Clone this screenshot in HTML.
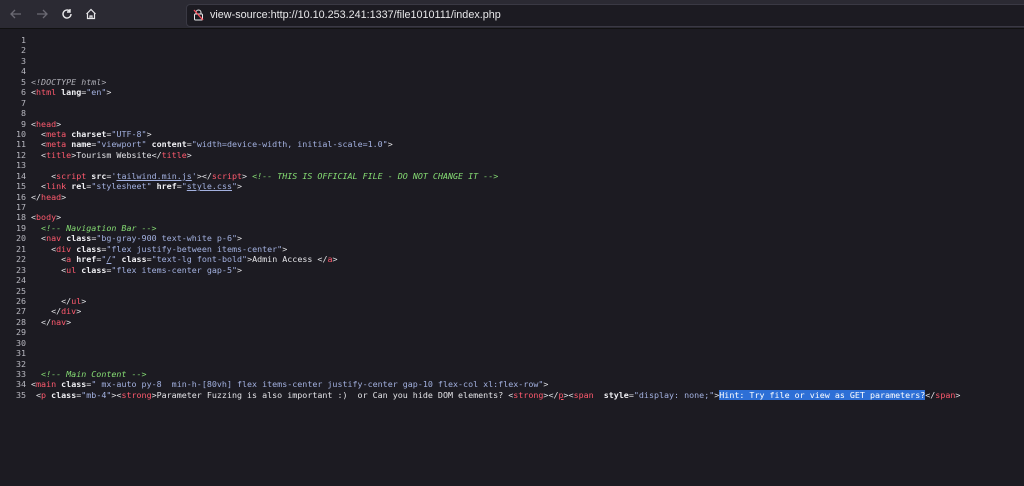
<!DOCTYPE html>
<html><head><style>
body{margin:0;width:1024px;height:486px;background:#1c1b22;overflow:hidden;font-family:"Liberation Sans",sans-serif}
.tb{position:absolute;left:0;top:0;width:1024px;height:28px;background:#2b2a33;border-bottom:1px solid #111}
.url{position:absolute;left:186px;top:4px;width:850px;height:21px;background:#1c1b22;border-radius:4px;border:1px solid #3a3944}
.url span{position:absolute;left:23px;top:4px;color:#e8e8ea;font-size:10.8px}
pre{position:absolute;left:0;top:35px;margin:0;font-family:"DejaVu Sans Mono","Liberation Mono",monospace;font-size:8.35px;line-height:10.44px;color:#e4e4e8}
.n{display:inline-block;width:26px;text-align:right;color:#b8b8c0;margin-right:5px}
.t{color:#ff5a6e}.a{color:#f0f0f4;font-weight:bold}.v{color:#a3b1e0}.c{color:#86de74;font-style:italic}.d{color:#b0b0b8;font-style:italic}
.u{text-decoration:underline}.h{background:#2d6fd6;color:#fff}
</style></head><body>
<div class="tb">
<svg style="position:absolute;left:10px;top:8px" width="12" height="12" viewBox="0 0 12 12"><path d="M11 6H1M5 2L1 6l4 4" stroke="#6b6a73" stroke-width="1.3" fill="none"/></svg>
<svg style="position:absolute;left:36px;top:8px" width="12" height="12" viewBox="0 0 12 12"><path d="M1 6h10M7 2l4 4-4 4" stroke="#6b6a73" stroke-width="1.3" fill="none"/></svg>
<svg style="position:absolute;left:61px;top:8px" width="12" height="12" viewBox="0 0 12 12"><path d="M10 6a4 4 0 1 1-1.5-3.1M9 1v3H6" stroke="#e8e8ea" stroke-width="1.4" fill="none"/></svg>
<svg style="position:absolute;left:85px;top:8px" width="12" height="12" viewBox="0 0 12 12"><path d="M1.5 6L6 1.5 10.5 6M2.5 5v5.5h7V5M5 10.5V8h2v2.5" stroke="#e8e8ea" stroke-width="1.2" fill="none"/></svg>
<div class="url"><svg style="position:absolute;left:6px;top:4px" width="11" height="12" viewBox="0 0 11 12"><rect x="1.5" y="5" width="8" height="6" rx="1" stroke="#e8e8ea" fill="none"/><path d="M3 5V3.5a2.5 2.5 0 0 1 5 0V5" stroke="#e8e8ea" fill="none"/><path d="M1 1l9 10" stroke="#ff4f5e" stroke-width="1.3"/></svg><span>view-source:http://10.10.253.241:1337/file1010111/index.php</span></div>
</div>
<pre><span class="n">1</span>
<span class="n">2</span>
<span class="n">3</span>
<span class="n">4</span>
<span class="n">5</span><span class="d">&lt;!DOCTYPE html&gt;</span>
<span class="n">6</span>&lt;<span class="t">html</span> <span class="a">lang</span>=<span class="v">"en"</span>&gt;
<span class="n">7</span>
<span class="n">8</span>
<span class="n">9</span>&lt;<span class="t">head</span>&gt;
<span class="n">10</span>  &lt;<span class="t">meta</span> <span class="a">charset</span>=<span class="v">"UTF-8"</span>&gt;
<span class="n">11</span>  &lt;<span class="t">meta</span> <span class="a">name</span>=<span class="v">"viewport"</span> <span class="a">content</span>=<span class="v">"width=device-width, initial-scale=1.0"</span>&gt;
<span class="n">12</span>  &lt;<span class="t">title</span>&gt;Tourism Website&lt;/<span class="t">title</span>&gt;
<span class="n">13</span>
<span class="n">14</span>    &lt;<span class="t">script</span> <span class="a">src</span>=<span class="v">'<span class="u">tailwind.min.js</span>'</span>&gt;&lt;/<span class="t">script</span>&gt; <span class="c">&lt;!-- THIS IS OFFICIAL FILE - DO NOT CHANGE IT --&gt;</span>
<span class="n">15</span>  &lt;<span class="t">link</span> <span class="a">rel</span>=<span class="v">"stylesheet"</span> <span class="a">href</span>=<span class="v">"<span class="u">style.css</span>"</span>&gt;
<span class="n">16</span>&lt;/<span class="t">head</span>&gt;
<span class="n">17</span>
<span class="n">18</span>&lt;<span class="t">body</span>&gt;
<span class="n">19</span>  <span class="c">&lt;!-- Navigation Bar --&gt;</span>
<span class="n">20</span>  &lt;<span class="t">nav</span> <span class="a">class</span>=<span class="v">"bg-gray-900 text-white p-6"</span>&gt;
<span class="n">21</span>    &lt;<span class="t">div</span> <span class="a">class</span>=<span class="v">"flex justify-between items-center"</span>&gt;
<span class="n">22</span>      &lt;<span class="t">a</span> <span class="a">href</span>=<span class="v">"<span class="u">/</span>"</span> <span class="a">class</span>=<span class="v">"text-lg font-bold"</span>&gt;Admin Access &lt;/<span class="t">a</span>&gt;
<span class="n">23</span>      &lt;<span class="t">ul</span> <span class="a">class</span>=<span class="v">"flex items-center gap-5"</span>&gt;
<span class="n">24</span>
<span class="n">25</span>
<span class="n">26</span>      &lt;/<span class="t">ul</span>&gt;
<span class="n">27</span>    &lt;/<span class="t">div</span>&gt;
<span class="n">28</span>  &lt;/<span class="t">nav</span>&gt;
<span class="n">29</span>
<span class="n">30</span>
<span class="n">31</span>
<span class="n">32</span>
<span class="n">33</span>  <span class="c">&lt;!-- Main Content --&gt;</span>
<span class="n">34</span>&lt;<span class="t">main</span> <span class="a">class</span>=<span class="v">" mx-auto py-8  min-h-[80vh] flex items-center justify-center gap-10 flex-col xl:flex-row"</span>&gt;
<span class="n">35</span> &lt;<span class="t">p</span> <span class="a">class</span>=<span class="v">"mb-4"</span>&gt;&lt;<span class="t">strong</span>&gt;Parameter Fuzzing is also important :)  or Can you hide DOM elements? &lt;<span class="t">strong</span>&gt;&lt;/<span class="t u">p</span>&gt;&lt;<span class="t">span</span>  <span class="a">style</span>=<span class="v">"display: none;"</span>&gt;<span class="h">Hint: Try file or view as GET parameters?</span>&lt;/<span class="t">span</span>&gt;
</pre>
</body></html>
